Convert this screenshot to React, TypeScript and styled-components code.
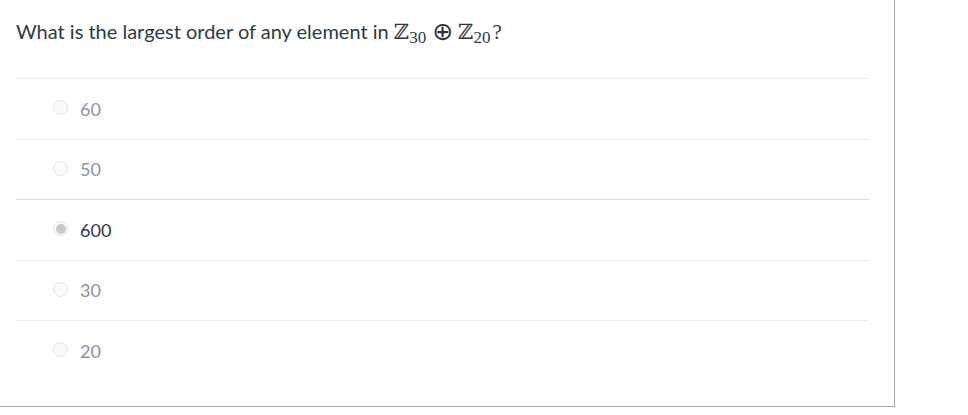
import styled, { createGlobalStyle } from "styled-components";

const GlobalStyle = createGlobalStyle`
  html, body {
    margin: 0;
    padding: 0;
    background: #ffffff;
  }
  body {
    font-family: Lato, "Liberation Sans", sans-serif;
  }
`;

const Panel = styled.div`
  width: 894px;
  height: 406px;
  border-right: 1px solid #a8a8a8;
  border-bottom: 1px solid #a8a8a8;
  background: #ffffff;
  display: flex;
  flex-direction: column;
`;

const Question = styled.div`
  padding: 19px 0 0 16px;
  height: 78px;
  box-sizing: border-box;
  font-size: 20px;
  color: #2d3b45;
  line-height: 24px;
`;

const MathBB = styled.span`
  font-family: "DejaVu Serif", "Liberation Serif", serif;
  font-size: 21px;
  color: #333;
`;

const Sub = styled.sub`
  font-family: "Liberation Serif", serif;
  font-size: 17px;
  vertical-align: -4px;
  line-height: 0;
`;

const Oplus = styled.span`
  font-family: "DejaVu Sans", serif;
  font-size: 25px;
  line-height: 0;
  color: #333;
  margin: 0 5px 0 6px;
  position: relative;
  top: 1px;
`;

const Mark = styled.span`
  font-family: "Liberation Serif", serif;
  font-size: 21px;
  color: #333;
  margin-left: 2px;
`;

const Answers = styled.div`
  margin: 0 25px 0 16px;
  display: flex;
  flex-direction: column;
`;

const Row = styled.label<{ $strong?: boolean }>`
  display: flex;
  align-items: center;
  gap: 12px;
  height: 60.5px;
  padding-left: 37px;
  box-sizing: border-box;
  border-top: 1px solid ${({ $strong }) => ($strong ? "#dcdcdc" : "#ececec")};
`;

const Radio = styled.span<{ $checked?: boolean }>`
  width: 15px;
  height: 15px;
  border-radius: 50%;
  border: 1px solid #e3e3e3;
  background: #fafafa;
  box-sizing: border-box;
  display: flex;
  align-items: center;
  justify-content: center;
  margin-top: -2px;

  &::after {
    content: "";
    width: 10px;
    height: 10px;
    border-radius: 50%;
    background: ${({ $checked }) => ($checked ? "#c8c8c8" : "transparent")};
  }
`;

const AnswerText = styled.span<{ $checked?: boolean }>`
  font-size: 18px;
  color: ${({ $checked }) => ($checked ? "#2d3b45" : "#8b949c")};
`;

const answers = ["60", "50", "600", "30", "20"];
const selected = "600";

export default function App() {
  return (
    <>
      <GlobalStyle />
      <Panel>
        <Question>
          What is the largest order of any element in{" "}
          <MathBB>ℤ</MathBB>
          <Sub>30</Sub>
          <Oplus>⊕</Oplus>
          <MathBB>ℤ</MathBB>
          <Sub>20</Sub>
          <Mark>?</Mark>
        </Question>
        <Answers>
          {answers.map((a, i) => (
            <Row key={a} $strong={i === 2}>
              <Radio $checked={a === selected} />
              <AnswerText $checked={a === selected}>{a}</AnswerText>
            </Row>
          ))}
        </Answers>
      </Panel>
    </>
  );
}
